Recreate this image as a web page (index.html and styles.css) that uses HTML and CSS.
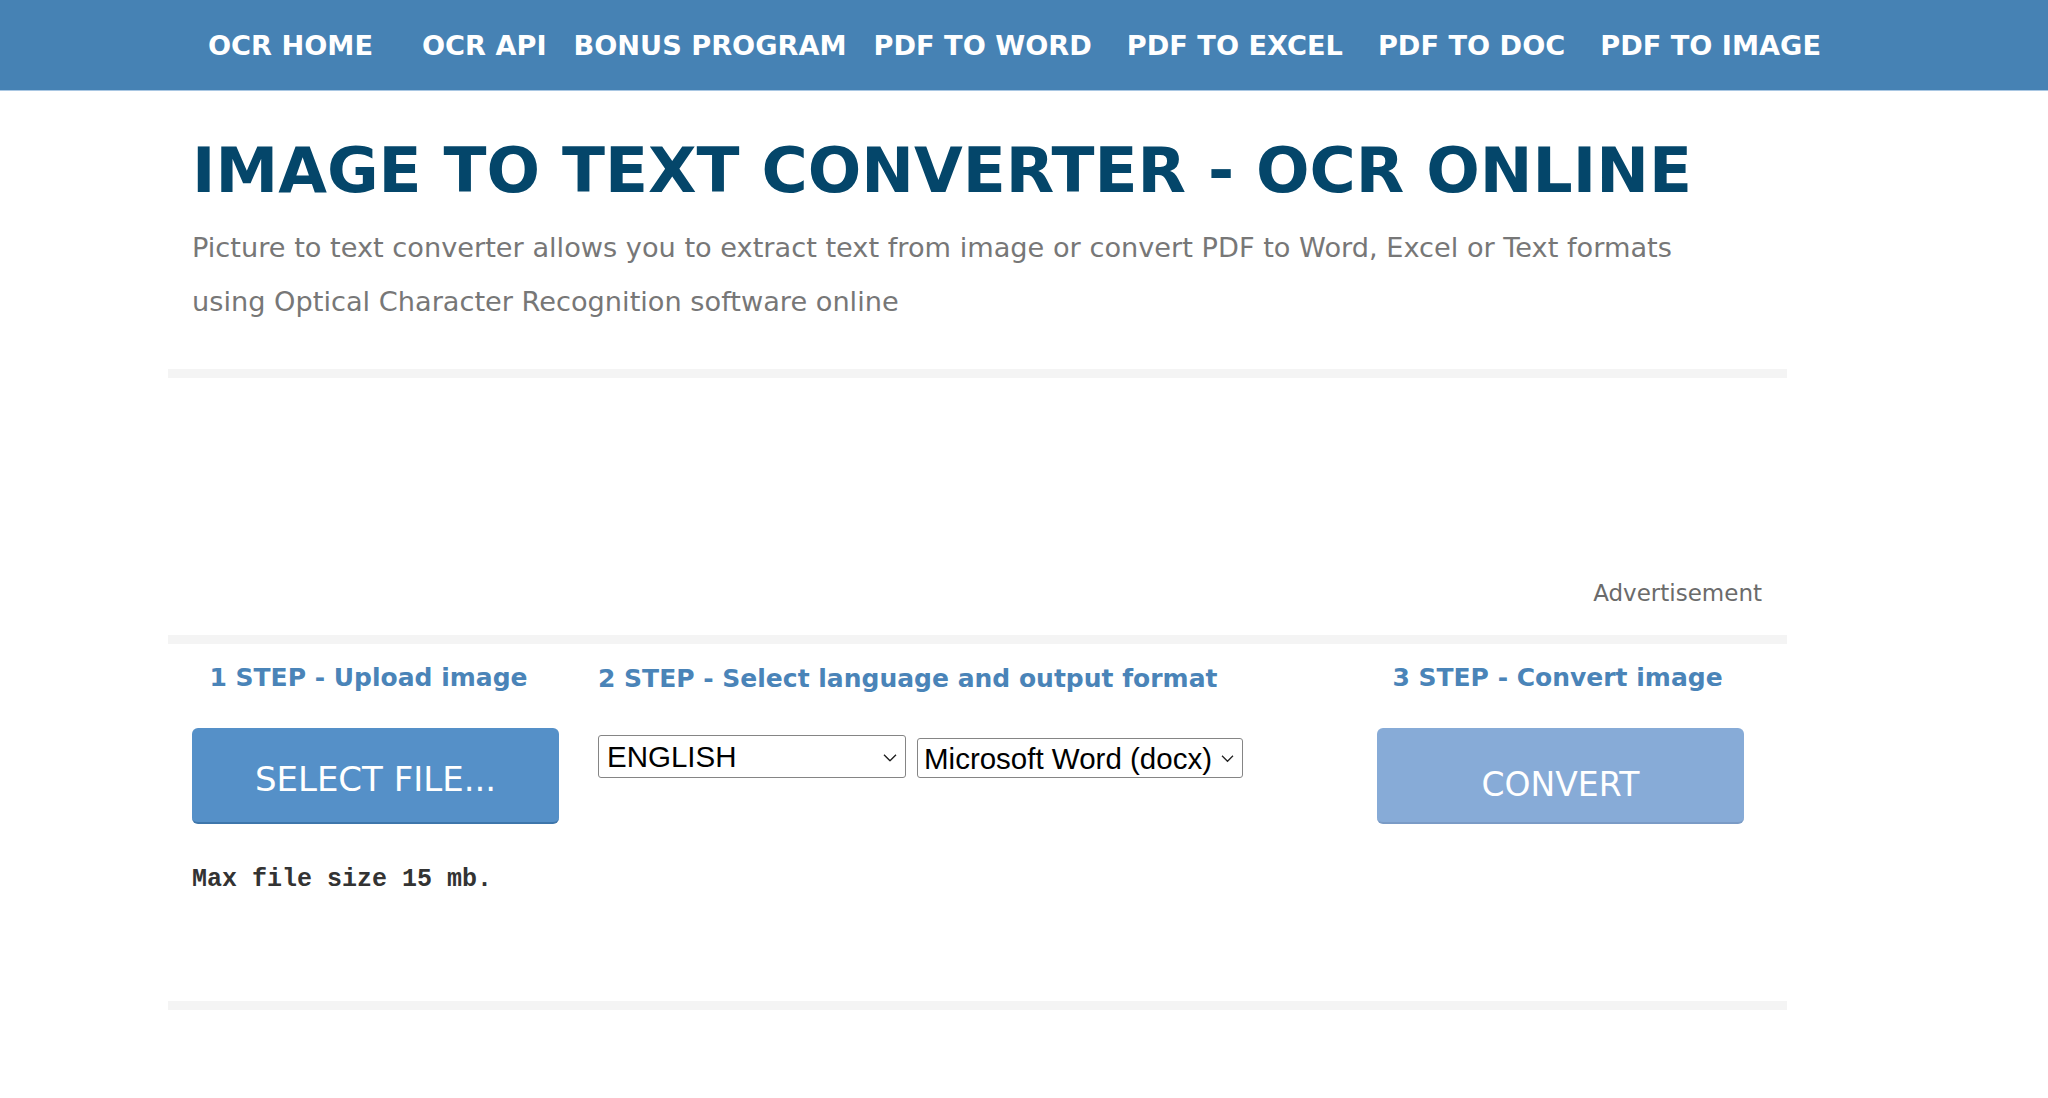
FILE: index.html
```html
<!DOCTYPE html>
<html lang="en">
<head>
<meta charset="utf-8">
<title>Image to Text Converter - OCR Online</title>
<link rel="stylesheet" href="styles.css">
</head>
<body>
<nav class="topbar">
  <ul class="menu">
    <li class="menu-home"><a href="#">OCR HOME</a></li>
    <li><a href="#">OCR API</a></li>
    <li><a href="#">BONUS PROGRAM</a></li>
    <li><a href="#">PDF TO WORD</a></li>
    <li class="menu-wide"><a href="#">PDF TO EXCEL</a></li>
    <li class="menu-wide"><a href="#">PDF TO DOC</a></li>
    <li class="menu-wide"><a href="#">PDF TO IMAGE</a></li>
  </ul>
</nav>
<main class="container">
  <header class="intro">
    <h1 class="title">IMAGE TO TEXT CONVERTER - OCR ONLINE</h1>
    <p class="lead">Picture to text converter allows you to extract text from image or convert PDF to Word, Excel or Text formats using Optical Character Recognition software online</p>
  </header>
  <div class="divider"></div>
  <div class="ad-slot"><span class="ad-label">Advertisement</span></div>
  <div class="divider"></div>
  <section class="steps">
    <div class="step step-one">
      <h3 class="step-title">1 STEP - Upload image</h3>
      <button class="btn btn-select" type="button">SELECT FILE...</button>
      <p class="note">Max file size 15 mb.</p>
    </div>
    <div class="step step-two">
      <h3 class="step-title step-title-left">2 STEP - Select language and output format</h3>
      <div class="selects">
        <span class="select-wrap select-lang">
          <select class="select"><option>ENGLISH</option></select>
          <svg class="chevron" width="14" height="8" viewBox="0 0 14 8"><path d="M1 1 L7 7 L13 1" fill="none" stroke="#222" stroke-width="1.4"/></svg>
        </span>
        <span class="select-wrap select-fmt">
          <select class="select"><option>Microsoft Word (docx)</option></select>
          <svg class="chevron" width="13" height="8" viewBox="0 0 13 8"><path d="M1 1 L6.5 6.5 L12 1" fill="none" stroke="#222" stroke-width="1.3"/></svg>
        </span>
      </div>
    </div>
    <div class="step step-three">
      <h3 class="step-title">3 STEP - Convert image</h3>
      <button class="btn btn-convert" type="button">CONVERT</button>
    </div>
  </section>
  <div class="divider"></div>
</main>
</body>
</html>
```
FILE: styles.css
```css
* { box-sizing: border-box; }

body {
  margin: 0;
  background: #ffffff;
  font-family: "DejaVu Sans", Verdana, sans-serif;
}

.topbar {
  height: 91px;
  background: #4682b4;
  border-bottom: 1px solid #a9c7e3;
}

.menu {
  list-style: none;
  margin: 0;
  padding: 1px 0 0 208px;
  display: flex;
  gap: 27px;
  line-height: 89px;
}

.menu a {
  color: #ffffff;
  text-decoration: none;
  font-weight: bold;
  font-size: 27.2px;
}

.menu-home { margin-right: 22px; }
.menu-wide { margin-left: 8px; }

.container {
  width: 1619px;
  margin: 0 0 0 168px;
}

.intro { padding: 0 24px; }

.title {
  margin: 42px 0 0;
  font-size: 63px;
  line-height: 76px;
  font-weight: bold;
  color: #04466a;
  white-space: nowrap;
}

.lead {
  max-width: 1520px;
  margin: 12px 0 40px;
  font-size: 27.2px;
  line-height: 54px;
  color: #777777;
}

.divider {
  height: 9px;
  background: #f4f4f4;
}

.ad-slot {
  height: 257px;
  display: flex;
  align-items: flex-end;
  justify-content: flex-end;
  padding: 0 25px 29px 0;
}

.ad-label {
  font-size: 23px;
  line-height: 26px;
  color: #6b6b6b;
}

.steps {
  display: grid;
  grid-template-columns: 367px 1fr 367px;
  column-gap: 39px;
  padding: 19px 43px 106px 24px;
}

.step-title {
  margin: 0;
  font-size: 25px;
  line-height: 30px;
  font-weight: bold;
  color: #4a84b8;
  text-align: center;
  padding-right: 14px;
  white-space: nowrap;
}

.step-three .step-title { padding-right: 6px; }

.step-title-left {
  text-align: left;
  padding: 1px 0 0;
}

.btn {
  display: flex;
  align-items: center;
  justify-content: center;
  width: 367px;
  height: 96px;
  margin-top: 35px;
  border: none;
  border-radius: 6px;
  color: #ffffff;
  font-family: "DejaVu Sans", Verdana, sans-serif;
  font-weight: normal;
  cursor: pointer;
}

.btn-select {
  background: #5590c8;
  border-bottom: 2px solid #3e76ab;
  font-size: 34px;
  padding-top: 9px;
}

.btn-convert {
  background: #87abd7;
  border-bottom: 2px solid #7a9bc6;
  font-size: 33px;
  padding-top: 19px;
}

.note {
  margin: 41px 0 0;
  font-family: "Liberation Mono", "Courier New", monospace;
  font-weight: bold;
  font-size: 25px;
  line-height: 30px;
  color: #333333;
  white-space: nowrap;
}

.selects {
  display: flex;
  align-items: flex-start;
  gap: 11px;
  margin-top: 41px;
}

.select-wrap {
  position: relative;
  display: block;
}

.select {
  -webkit-appearance: none;
  appearance: none;
  display: block;
  background: #ffffff;
  border: 1px solid #858585;
  border-radius: 3px;
  color: #000000;
  font-family: "Liberation Sans", Arial, sans-serif;
  font-size: 29.5px;
  padding: 0 0 0 8px;
}

.select-lang .select { width: 308px; height: 43px; }

.select-fmt { margin-top: 3px; }
.select-fmt .select { width: 326px; height: 40px; padding-left: 6px; }

.chevron {
  position: absolute;
  right: 9px;
  top: 50%;
  transform: translateY(-40%);
  pointer-events: none;
}
```
